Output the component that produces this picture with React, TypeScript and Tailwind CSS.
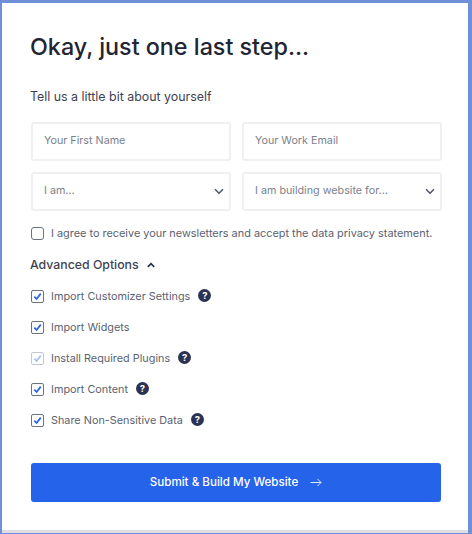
import React from "react";

const Help = () => (
  <span className="w-[13px] h-[13px] rounded-full bg-[#2b3252] text-white text-[9.5px] font-bold leading-[13px] text-center shrink-0">?</span>
);

const Check = ({ muted }: { muted?: boolean }) => (
  <span className={`w-[13px] h-[13px] rounded-[2px] border bg-white flex items-center justify-center shrink-0 ${muted ? "border-[#c3c7cf]" : "border-[#6b7280]"}`}>
    <svg width="9" height="9" viewBox="0 0 10 10" fill="none" stroke={muted ? "#a5bdf2" : "#2563eb"} strokeWidth="1.9">
      <path d="M1.5 5.2 L4 7.8 L8.6 1.8" />
    </svg>
  </span>
);

const Chevron = () => (
  <svg width="10" height="7" viewBox="0 0 10 7" fill="none" stroke="#4b5563" strokeWidth="1.5">
    <path d="M1 1.2 L5 5.2 L9 1.2" />
  </svg>
);

const Option = ({ label, help, muted }: { label: string; help?: boolean; muted?: boolean }) => (
  <div className="flex items-center h-[16px]">
    <Check muted={muted} />
    <span className="ml-[7px] text-[10.85px] leading-[16px] text-[#5b6270]">{label}</span>
    {help && <span className="ml-[8px] -mt-[2px] flex"><Help /></span>}
  </div>
);

const box = "h-[39px] border-2 border-[#eff0f3] rounded-[3px] flex items-center pl-[11px] pr-3 text-[10.75px] text-[#7b818c] bg-white";

export default function App() {
  return (
    <div className="w-[472px] h-[534px] bg-[#6f8fd8] pl-[2px] pt-[3px] pr-[4px] pb-0 overflow-hidden" style={{ fontFamily: "Inter, sans-serif" }}>
      <div className="h-[530px] bg-white border-b-[3px] border-[#dfdfe2] pl-[28px] pr-[26px] pt-[29px]">
        <h1 className="text-[23.3px] leading-[30px] font-medium text-[#1f2533]">Okay, just one last step...</h1>
        <p className="mt-[26px] text-[12.4px] leading-[18px] text-[#3d4354]">Tell us a little bit about yourself</p>
        <div className="mt-[16px] ml-[1px] grid grid-cols-2 gap-x-[11px] gap-y-[11px]">
          <div className={box}>Your First Name</div>
          <div className={box}>Your Work Email</div>
          <div className={`${box} justify-between !pr-[5px]`}>I am...<Chevron /></div>
          <div className={`${box} justify-between !pr-[5px]`}>I am building website for...<Chevron /></div>
        </div>
        <div className="mt-[14px] ml-[1px] flex items-center h-[16px]">
          <span className="w-[13px] h-[13px] rounded-[3px] border border-[#6b7280] bg-white shrink-0" />
          <span className="ml-[7px] text-[10.9px] leading-[16px] text-[#5b6270] whitespace-nowrap">I agree to receive your newsletters and accept the data privacy statement.</span>
        </div>
        <div className="mt-[15px] flex items-center h-[18px]">
          <span className="text-[12.3px] font-medium text-[#3d4354]">Advanced Options</span>
          <svg className="ml-[8px]" width="8" height="6" viewBox="0 0 8 6" fill="none" stroke="#2b3252" strokeWidth="1.7"><path d="M0.8 4.8 L4 1.6 L7.2 4.8" /></svg>
        </div>
        <div className="mt-[14px] ml-[1px] flex flex-col gap-[15px]">
          <Option label="Import Customizer Settings" help />
          <Option label="Import Widgets" />
          <Option label="Install Required Plugins" help muted />
          <Option label="Import Content" help />
          <Option label="Share Non-Sensitive Data" help />
        </div>
        <button className="mt-[35px] ml-[1px] w-[410px] h-[39px] rounded-[3px] bg-[#2563eb] text-white text-[11.6px] font-medium flex items-center justify-center">
          Submit & Build My Website
          <svg className="ml-[12px]" width="12" height="9" viewBox="0 0 12 9" fill="none" stroke="#dbe6ff" strokeWidth="1"><path d="M0.5 4.5 H11 M7.5 1 L11 4.5 L7.5 8" /></svg>
        </button>
      </div>
    </div>
  );
}
